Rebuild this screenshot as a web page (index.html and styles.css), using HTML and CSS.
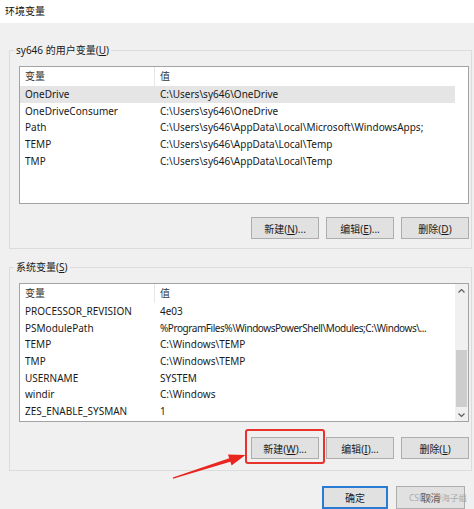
FILE: index.html
```html
<!DOCTYPE html>
<html lang="zh-CN">
<head>
    <meta charset="UTF-8">
    <meta name="viewport" content="width=device-width, initial-scale=1.0">
    <title>环境变量</title>
    <link rel="stylesheet" href="styles.css">
</head>
<body>

<div class="window">

    <div class="titlebar">环境变量</div>

    <div class="content">

        <!-- variables del usuario -->
        <fieldset class="group">
            <legend>sy646 的用户变量(<u>U</u>)</legend>

            <div class="list list-user">
                <div class="rows">
                    <div class="head"><span class="name">变量</span><span class="value">值</span></div>
                    <div class="row selected"><span class="name">OneDrive</span><span class="value">C:\Users\sy646\OneDrive</span></div>
                    <div class="row"><span class="name">OneDriveConsumer</span><span class="value">C:\Users\sy646\OneDrive</span></div>
                    <div class="row"><span class="name">Path</span><span class="value">C:\Users\sy646\AppData\Local\Microsoft\WindowsApps;</span></div>
                    <div class="row"><span class="name">TEMP</span><span class="value">C:\Users\sy646\AppData\Local\Temp</span></div>
                    <div class="row"><span class="name">TMP</span><span class="value">C:\Users\sy646\AppData\Local\Temp</span></div>
                </div>
            </div>

            <div class="buttons">
                <button class="btn">新建(<u>N</u>)...</button>
                <button class="btn">编辑(<u>E</u>)...</button>
                <button class="btn">删除(<u>D</u>)</button>
            </div>
        </fieldset>

        <!-- variables del sistema -->
        <fieldset class="group group-system">
            <legend>系统变量(<u>S</u>)</legend>

            <div class="list list-system">
                <div class="rows">
                    <div class="head"><span class="name">变量</span><span class="value">值</span></div>
                    <div class="row"><span class="name">PROCESSOR_REVISION</span><span class="value">4e03</span></div>
                    <div class="row"><span class="name">PSModulePath</span><span class="value tight">%ProgramFiles%\WindowsPowerShell\Modules;C:\Windows\...</span></div>
                    <div class="row"><span class="name">TEMP</span><span class="value">C:\Windows\TEMP</span></div>
                    <div class="row"><span class="name">TMP</span><span class="value">C:\Windows\TEMP</span></div>
                    <div class="row"><span class="name">USERNAME</span><span class="value">SYSTEM</span></div>
                    <div class="row"><span class="name">windir</span><span class="value">C:\Windows</span></div>
                    <div class="row"><span class="name">ZES_ENABLE_SYSMAN</span><span class="value">1</span></div>
                </div>
                <div class="scrollbar">
                    <div class="arrow-btn">
                        <svg width="7" height="4" viewBox="0 0 7 4"><polyline points="0.5,3.5 3.5,0.5 6.5,3.5" fill="none" stroke="#606060" stroke-width="1.2"/></svg>
                    </div>
                    <div class="track"><div class="thumb"></div></div>
                    <div class="arrow-btn">
                        <svg width="7" height="4" viewBox="0 0 7 4"><polyline points="0.5,0.5 3.5,3.5 6.5,0.5" fill="none" stroke="#606060" stroke-width="1.2"/></svg>
                    </div>
                </div>
            </div>

            <div class="buttons buttons-system">
                <button class="btn marked">新建(<u>W</u>)...</button>
                <button class="btn">编辑(<u>I</u>)...</button>
                <button class="btn">删除(<u>L</u>)</button>
            </div>
        </fieldset>

        <div class="dialog-buttons">
            <button class="btn btn-ok">确定</button>
            <button class="btn btn-cancel">取消</button>
        </div>

    </div>

    <span class="watermark">CSDN @海子姐</span>

    <!-- flecha roja -->
    <svg class="pointer" width="474" height="509" viewBox="0 0 474 509">
        <polygon points="173,478.8 230.3,461.8 231.6,465.6 245.5,455 228,454.5 229.2,458.2 172.8,477.6" fill="#e8261f"/>
    </svg>

</div>

</body>
</html>
```

FILE: styles.css
```css
* {
    box-sizing: border-box;
}
body {
    margin: 0;
    font-family: "Noto Sans", "Noto Sans CJK SC", sans-serif;
    font-size: 10px;
    color: #1a1a1a;
    background: #fff;
}
.window {
    position: relative;
    width: 474px;
    height: 509px;
    overflow: hidden;
    background: #f0f0f0;
}
.titlebar {
    height: 23px;
    line-height: 22px;
    padding-left: 5px;
    background: #fff;
    color: #111;
}
.content {
    padding: 19px 2px 0 9px;
}
.group {
    margin: 0;
    min-width: 0;
    border: 1px solid #dcdcdc;
    padding: 8px 2px 9px 9px;
}
.group legend {
    margin-left: -5px;
    padding: 0 2px;
    line-height: 16px;
}
.group-system {
    margin-top: 10px;
    padding-bottom: 11px;
}
.list {
    display: flex;
    background: #fff;
    border: 1px solid #a3a3a3;
}
.list-user {
    height: 138px;
}
.list-system {
    height: 139px;
}
.rows {
    flex: 1;
    min-width: 0;
}
.head,
.row {
    display: flex;
    width: 435px;
    white-space: nowrap;
}
.head {
    height: 19px;
    line-height: 19px;
    color: #333;
}
.row {
    height: 16.7px;
    line-height: 16.7px;
}
.row.selected {
    background: #e5e5e5;
}
.name {
    width: 135px;
    flex-shrink: 0;
    padding-left: 5px;
}
.head .name {
    border-right: 1px solid #e6e6e6;
}
.value {
    flex: 1;
    min-width: 0;
    padding-left: 5px;
    overflow: hidden;
}
.tight {
    letter-spacing: -0.45px;
}
.scrollbar {
    width: 13px;
    display: flex;
    flex-direction: column;
    background: #f0f0f0;
}
.arrow-btn {
    height: 13px;
    display: flex;
    align-items: center;
    justify-content: center;
}
.arrow-btn svg {
    display: block;
}
.track {
    flex: 1;
    padding-top: 53px;
}
.thumb {
    width: 11px;
    height: 57px;
    margin: 0 auto;
    background: #cdcdcd;
}
.buttons {
    display: flex;
    justify-content: flex-end;
    gap: 7px;
    margin-top: 13px;
}
.buttons-system {
    margin-top: 15px;
}
.btn {
    width: 68px;
    height: 22px;
    padding: 0;
    font: inherit;
    color: #1a1a1a;
    background: #e1e1e1;
    border: 1px solid #adadad;
    border-radius: 0;
}
.marked {
    position: relative;
}
.marked::after {
    content: "";
    position: absolute;
    left: -7px;
    right: -7px;
    top: -9px;
    bottom: -6px;
    border: 2px solid #e8322c;
    border-radius: 3px;
}
.dialog-buttons {
    display: flex;
    justify-content: flex-end;
    gap: 8px;
    margin-top: 15px;
    padding-right: 7px;
}
.dialog-buttons .btn {
    height: 23px;
}
.btn-ok {
    width: 66px;
    border: 2px solid #2a7bd4;
}
.btn-cancel {
    width: 69px;
    color: #555;
}
.watermark {
    position: absolute;
    left: 409px;
    top: 491px;
    font-size: 8.5px;
    color: rgba(150, 150, 150, 0.75);
    white-space: nowrap;
}
.pointer {
    position: absolute;
    left: 0;
    top: 0;
    pointer-events: none;
}
```
